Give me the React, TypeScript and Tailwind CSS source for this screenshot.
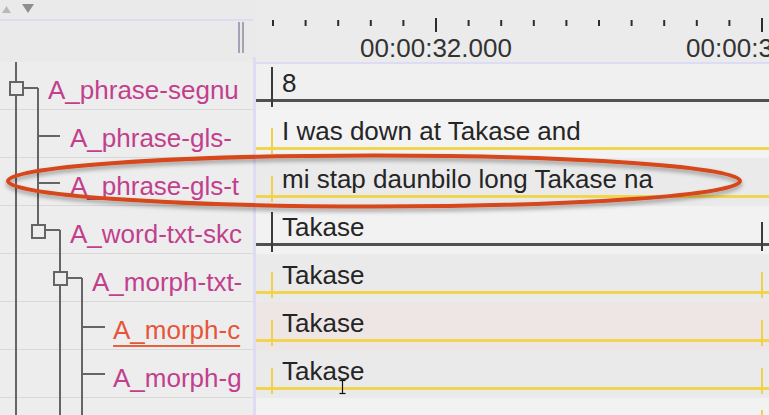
import React from "react";

const FONT = { fontFamily: '"Liberation Sans", Arial, Helvetica, sans-serif' };

type Tier = { label: string; indent: string; red?: boolean };

const tiers: Tier[] = [
  { label: "A_phrase-segnu", indent: "pl-[48px]" },
  { label: "A_phrase-gls-", indent: "pl-[70px]" },
  { label: "A_phrase-gls-t", indent: "pl-[70px]" },
  { label: "A_word-txt-skc", indent: "pl-[70px]" },
  { label: "A_morph-txt-", indent: "pl-[92px]" },
  { label: "A_morph-c", indent: "pl-[113px]", red: true },
  { label: "A_morph-g", indent: "pl-[113px]" },
  { label: "A_morph-ps", indent: "pl-[113px]" },
];

type Ann = {
  bg: string;
  text?: string;
  kind: "dark" | "yellow" | "none";
  left?: boolean;
  right?: boolean;
};

const anns: Ann[] = [
  { bg: "bg-[#f0f0f0]", text: "8", kind: "dark", left: true },
  { bg: "bg-[#f3f3f3]", text: "I was down at Takase and", kind: "yellow", left: true },
  { bg: "bg-[#eaeaea]", text: "mi stap daunbilo long Takase na", kind: "yellow", left: true },
  { bg: "bg-[#f2f2f2]", text: "Takase", kind: "dark", left: true, right: true },
  { bg: "bg-[#eaeaea]", text: "Takase", kind: "yellow", left: true, right: true },
  { bg: "bg-[#eee5e5]", text: "Takase", kind: "yellow", left: true, right: true },
  { bg: "bg-[#eaeaea]", text: "Takase", kind: "yellow", left: true, right: true },
  { bg: "bg-[#f2f2f2]", kind: "none" },
];

function TierTree() {
  const s = "#656565";
  return (
    <svg
      className="absolute left-0 top-[62px] pointer-events-none"
      width={253}
      height={353}
      viewBox="0 62 253 353"
    >
      <g stroke={s} strokeWidth={2} fill="none">
        <line x1={16} y1={62} x2={16} y2={420} />
        <line x1={23} y1={88} x2={38} y2={88} />
        <line x1={38} y1={88} x2={38} y2={225} />
        <line x1={38} y1={136} x2={60} y2={136} />
        <line x1={38} y1={183} x2={60} y2={183} />
        <line x1={45} y1={230} x2={60} y2={230} />
        <line x1={60} y1={230} x2={60} y2={420} />
        <line x1={67} y1={278} x2={82} y2={278} />
        <line x1={82} y1={278} x2={82} y2={420} />
        <line x1={82} y1={327} x2={105} y2={327} />
        <line x1={82} y1={374} x2={105} y2={374} />
        <line x1={82} y1={422} x2={105} y2={422} />
      </g>
      <g stroke={s} strokeWidth={2} fill="#ededed">
        <rect x={10} y={82} width={13} height={13} />
        <rect x={32} y={225} width={13} height={13} />
        <rect x={54} y={272} width={13} height={13} />
      </g>
    </svg>
  );
}

function LeftPanel() {
  return (
    <div className="relative w-[253px] shrink-0 flex flex-col bg-[#ececec]">
      <div className="h-[62px] shrink-0 flex flex-col bg-[#eaeaea]">
        <div className="h-[19px] shrink-0 flex items-start pt-[4px] pl-[2px] gap-[11px]">
          <svg width={9} height={9} viewBox="0 0 9 9">
            <polygon points="4.5,2 9,9 0,9" fill="#b9b9b9" />
          </svg>
          <svg width={12} height={9} viewBox="0 0 12 9">
            <polygon points="0,0 12,0 6,9" fill="#8e8e8e" />
          </svg>
        </div>
        <div className="h-[2px] shrink-0 bg-[#dedcf4]" />
        <div className="flex justify-end pr-[9px] pt-[1px] gap-[2px]">
          <div className="w-[2px] h-[31px] bg-[#a3a3b6]" />
          <div className="w-[2px] h-[31px] bg-[#a3a3b6]" />
        </div>
      </div>
      {tiers.map((t, i) => (
        <div
          key={i}
          className={`h-[48px] shrink-0 border-b border-[#d8d8d8] bg-[#ededed] overflow-hidden ${t.indent}`}
        >
          <div className="w-[200px] pt-[13px]">
            {t.red ? (
              <span className="block whitespace-nowrap text-[26px] leading-[30px] text-[#e6553a] underline decoration-[#e8603f] decoration-2 underline-offset-[6px]">
                {t.label}
              </span>
            ) : (
              <span className="block whitespace-nowrap text-[26px] leading-[30px] text-[#c23f8e]">
                {t.label}
              </span>
            )}
          </div>
        </div>
      ))}
      <TierTree />
    </div>
  );
}

function Ruler() {
  const ticks = Array.from({ length: 16 }, (_, k) => 17 + 32.6 * k);
  return (
    <div className="relative h-[62px] shrink-0 bg-[#ebebeb]">
      <svg className="absolute left-0 top-0" width={513} height={62}>
        {ticks.map((x, k) =>
          k % 10 === 5 ? (
            <rect key={k} x={x - 1} y={18} width={2} height={14} fill="#2d2d2d" />
          ) : (
            <rect key={k} x={x - 1} y={20} width={2} height={6} fill="#2d2d2d" />
          )
        )}
      </svg>
      <div className="absolute left-[180px] top-[33px] -translate-x-1/2 whitespace-nowrap text-[26px] leading-[30px] text-[#333]">
        00:00:32.000
      </div>
      <div className="absolute left-[506px] top-[33px] -translate-x-1/2 whitespace-nowrap text-[26px] leading-[30px] text-[#333]">
        00:00:33.000
      </div>
    </div>
  );
}

function AnnRow({ a, first }: { a: Ann; first: boolean }) {
  const lineColor = a.kind === "dark" ? "bg-[#505050]" : "bg-[#f2d54f]";
  const tickColor = a.kind === "dark" ? "bg-[#3a3a3a]" : "bg-[#f0d24a]";
  return (
    <div
      className={`relative h-[48px] shrink-0 ${a.bg} ${
        first ? "border-t-2 border-[#dcdcf4]" : ""
      }`}
    >
      {a.text && (
        <div
          className={`${
            first ? "pt-[4px]" : "pt-[6px]"
          } pl-[26px] whitespace-nowrap text-[26px] leading-[30px] text-[#252525]`}
        >
          {a.text}
        </div>
      )}
      {a.kind !== "none" && (
        <div
          className={`absolute left-0 right-0 h-[3px] ${lineColor} ${
            first ? "top-[35px]" : "top-[37px]"
          }`}
        />
      )}
      {a.left && a.kind === "dark" && (
        <div
          className={`absolute left-[15px] w-[2px] h-[40px] ${tickColor} ${
            first ? "top-[3px]" : "top-[6px]"
          }`}
        />
      )}
      {a.left && a.kind === "yellow" && (
        <div className={`absolute left-[15px] w-[2px] top-[18px] h-[26px] ${tickColor}`} />
      )}
      {a.right && a.kind === "dark" && (
        <div className={`absolute left-[505px] w-[2px] top-[16px] h-[29px] ${tickColor}`} />
      )}
      {a.right && a.kind === "yellow" && (
        <div className={`absolute left-[505px] w-[2px] top-[18px] h-[26px] ${tickColor}`} />
      )}
      {a.kind === "none" && (
        <div className="absolute left-[505px] w-[2px] top-[12px] h-[26px] bg-[#f0d24a]" />
      )}
    </div>
  );
}

function RightPanel() {
  return (
    <div className="flex-1 flex flex-col overflow-hidden">
      <Ruler />
      {anns.map((a, i) => (
        <AnnRow key={i} a={a} first={i === 0} />
      ))}
    </div>
  );
}

export default function App() {
  return (
    <div
      className="relative w-[769px] h-[415px] overflow-hidden bg-[#ececec] flex"
      style={FONT}
    >
      <LeftPanel />
      <div className="w-[3px] shrink-0 flex flex-col">
        <div className="h-[57px] shrink-0 bg-[#eaeaea]" />
        <div className="flex-1 bg-[#dedcf2]" />
      </div>
      <RightPanel />

      <svg
        className="absolute left-0 top-0 pointer-events-none"
        width={769}
        height={415}
      >
        <defs>
          <filter id="sh" x="-10%" y="-50%" width="120%" height="200%">
            <feDropShadow dx="0" dy="3" stdDeviation="2" floodColor="#000" floodOpacity="0.35" />
          </filter>
        </defs>
        <ellipse
          cx={374}
          cy={181}
          rx={366}
          ry={25.5}
          fill="none"
          stroke="#d6461a"
          strokeWidth={4}
          filter="url(#sh)"
        />
      </svg>

      <svg
        className="absolute left-[338px] top-[379px] pointer-events-none"
        width={9}
        height={16}
        viewBox="0 0 9 16"
      >
        <g stroke="#111" strokeWidth={1.2} fill="none">
          <line x1={4.5} y1={2} x2={4.5} y2={14} />
          <line x1={1.5} y1={1.5} x2={7.5} y2={1.5} />
          <line x1={1.5} y1={14.5} x2={7.5} y2={14.5} />
        </g>
      </svg>
    </div>
  );
}
